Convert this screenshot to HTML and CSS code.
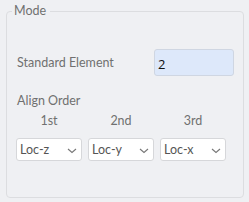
FILE: index.html
```html
<!DOCTYPE html>
<html lang="en">
<head>
    <meta charset="UTF-8">
    <title>Mode</title>
    <link rel="stylesheet" href="styles.css">
</head>
<body>
    <div class="panel">
    <fieldset class="mode">
        <legend>Mode</legend>

        <div class="row">
            <label for="stdElem">Standard Element</label>
            <input type="text" id="stdElem" class="num" value="2">
        </div>

        <div class="caption">Align Order</div>

        <div class="order">
            <div class="col">
                <span class="head">1st</span>
                <div class="pick">
                    <select><option>Loc-z</option><option>Loc-y</option><option>Loc-x</option></select>
                    <svg class="chev" width="10" height="6" viewBox="0 0 10 6"><path d="M1 1l4 3.5 4-3.5" fill="none" stroke="#777" stroke-width="1.1"/></svg>
                </div>
            </div>
            <div class="col">
                <span class="head">2nd</span>
                <div class="pick">
                    <select><option>Loc-y</option><option>Loc-z</option><option>Loc-x</option></select>
                    <svg class="chev" width="10" height="6" viewBox="0 0 10 6"><path d="M1 1l4 3.5 4-3.5" fill="none" stroke="#777" stroke-width="1.1"/></svg>
                </div>
            </div>
            <div class="col">
                <span class="head">3rd</span>
                <div class="pick">
                    <select><option>Loc-x</option><option>Loc-y</option><option>Loc-z</option></select>
                    <svg class="chev" width="10" height="6" viewBox="0 0 10 6"><path d="M1 1l4 3.5 4-3.5" fill="none" stroke="#777" stroke-width="1.1"/></svg>
                </div>
            </div>
        </div>
    </fieldset>
    </div>
</body>
</html>
```

FILE: styles.css
```css
body {
    margin: 0;
    background-color: #eff0f3;
    font-family: Lato, "Open Sans", sans-serif;
    font-size: 12.5px;
    line-height: 16px;
    color: #707070;
}
.panel {
    padding: 4px 6px 0 6px;
}
.mode {
    box-sizing: border-box;
    margin: 0;
    width: 238px;
    height: 194px;
    padding: 0 9px 0 10px;
    border: 1px solid #dcdde0;
    border-radius: 4px;
}
.mode legend {
    margin-left: -5px;
    padding: 0 4px 0 2px;
    line-height: 14px;
    color: #707070;
}
.row {
    display: flex;
    justify-content: space-between;
    align-items: center;
    margin-top: 31px;
}
.num {
    box-sizing: border-box;
    width: 80px;
    height: 27px;
    padding: 2px 3px 0 3px;
    border: 1px solid #cfd6e2;
    border-radius: 3px;
    background-color: #dde8fa;
    font-family: "Open Sans", Lato, sans-serif;
    font-size: 13px;
    color: #111;
}
.caption {
    margin-top: 17px;
}
.order {
    display: flex;
    gap: 6px;
    margin-left: -1px;
    margin-top: 3px;
}
.col {
    display: flex;
    flex-direction: column;
    align-items: center;
    width: 66px;
}
.head {
    line-height: 18px;
}
.pick {
    position: relative;
    margin-top: 8px;
}
.pick select {
    box-sizing: border-box;
    width: 66px;
    height: 23px;
    padding: 0 0 0 3px;
    border: 1px solid #d6d7da;
    border-radius: 3px;
    background-color: #fff;
    font-family: Lato, "Open Sans", sans-serif;
    font-size: 12.5px;
    color: #555;
    appearance: none;
    -webkit-appearance: none;
}
.chev {
    position: absolute;
    right: 5px;
    top: 10px;
    pointer-events: none;
}
```
